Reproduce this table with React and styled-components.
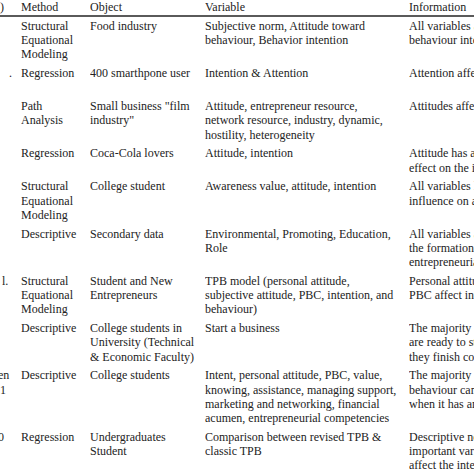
import React from "react";
import styled, { createGlobalStyle } from "styled-components";

const Global = createGlobalStyle`
  html, body {
    margin: 0;
    padding: 0;
    background: #ffffff;
    overflow: hidden;
  }
  body {
    font-family: "Liberation Serif", "Times New Roman", serif;
    font-size: 12px;
    color: #232323;
  }
`;

const Table = styled.div`
  display: flex;
  flex-direction: column;
  width: 640px;
`;

const Row = styled.div`
  display: grid;
  grid-template-columns: 21px 69px 115px 204px 231px;
  line-height: 14.25px;
  min-height: ${(p) => (p.$lines ? p.$lines * 14.25 : 0)}px;
  padding: ${(p) => (p.$head ? "0 0 1px" : "1.5px 0 3px")};
  border-bottom: ${(p) => (p.$head ? "2px solid #5a5a5a" : "none")};
  box-sizing: content-box;
`;

const Cell = styled.div`
  white-space: pre;
  overflow: hidden;
`;

const Frag = styled(Cell)`
  padding-left: ${(p) => p.$inset || 0}px;
  text-indent: ${(p) => p.$cut || 0}px;
`;

const header = { frag: ")", cols: ["Method", "Object", "Variable", "Information"] };

const rows = [
  {
    frag: "",
    cols: [
      "Structural\nEquational\nModeling",
      "Food industry",
      "Subjective norm, Attitude toward\nbehaviour, Behavior intention",
      "All variables affect\nbehaviour intention",
    ],
  },
  {
    frag: ".",
    inset: 9,
    lines: 2,
    cols: ["Regression", "400 smarthpone user", "Intention & Attention", "Attention affects"],
  },
  {
    frag: "",
    cols: [
      "Path\nAnalysis",
      "Small business \"film\nindustry\"",
      "Attitude, entrepreneur resource,\nnetwork resource, industry, dynamic,\nhostility, heterogeneity",
      "Attitudes affect",
    ],
  },
  {
    frag: "",
    cols: [
      "Regression",
      "Coca-Cola lovers",
      "Attitude, intention",
      "Attitude has a positive\neffect on the intention",
    ],
  },
  {
    frag: "",
    cols: [
      "Structural\nEquational\nModeling",
      "College student",
      "Awareness value, attitude, intention",
      "All variables have\ninfluence on attitude",
    ],
  },
  {
    frag: "",
    cols: [
      "Descriptive",
      "Secondary data",
      "Environmental, Promoting, Education,\nRole",
      "All variables affect\nthe formation of\nentrepreneurial",
    ],
  },
  {
    frag: "l.",
    inset: 2,
    cols: [
      "Structural\nEquational\nModeling",
      "Student and New\nEntrepreneurs",
      "TPB model (personal attitude,\nsubjective attitude, PBC, intention, and\nbehaviour)",
      "Personal attitude and\nPBC affect intention",
    ],
  },
  {
    frag: "",
    cols: [
      "Descriptive",
      "College students in\nUniversity (Technical\n& Economic Faculty)",
      "Start a business",
      "The majority of students\nare ready to start\nthey finish college",
    ],
  },
  {
    frag: "en\n1",
    cut: -2,
    cols: [
      "Descriptive",
      "College students",
      "Intent, personal attitude, PBC, value,\nknowing, assistance, managing support,\nmarketing and networking, financial\nacumen, entrepreneurial competencies",
      "The majority of\nbehaviour can occur\nwhen it has an",
    ],
  },
  {
    frag: "0",
    cut: -2,
    cols: [
      "Regression",
      "Undergraduates\nStudent",
      "Comparison between revised TPB &\nclassic TPB",
      "Descriptive norm is\nimportant variable to\naffect the intention",
    ],
  },
];

export default function App() {
  return (
    <>
      <Global />
      <Table>
        <Row $head>
          <Frag>{header.frag}</Frag>
          {header.cols.map((c, i) => (
            <Cell key={i}>{c}</Cell>
          ))}
        </Row>
        {rows.map((r, i) => (
          <Row key={i} $lines={r.lines}>
            <Frag $inset={r.inset} $cut={r.cut}>
              {r.frag}
            </Frag>
            {r.cols.map((c, j) => (
              <Cell key={j}>{c}</Cell>
            ))}
          </Row>
        ))}
      </Table>
    </>
  );
}
